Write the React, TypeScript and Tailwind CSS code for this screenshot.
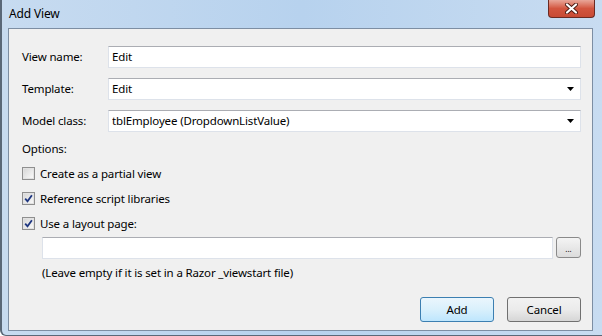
import React from 'react';

const font = "font-['Noto_Sans','Open_Sans',sans-serif]";

function Check({ checked }: { checked: boolean }) {
  return (
    <span className="flex h-[13px] w-[13px] shrink-0 items-center justify-center border border-[#8f8f8f] bg-white">
      <span className="flex h-[11px] w-[11px] items-center justify-center border border-[#e2e2e2] bg-gradient-to-br from-[#d8d8d8] to-[#f8f8f8]">
        {checked && (
          <svg width="9" height="9" viewBox="0 0 9 9">
            <path d="M1.2 4.6 L3.5 7.3 L7.9 1.2" fill="none" stroke="#1e3680" strokeWidth="1.8" />
          </svg>
        )}
      </span>
    </span>
  );
}

function TextBox({ value, dropdown }: { value?: string; dropdown?: boolean }) {
  return (
    <div className="flex h-[22px] flex-1 items-center border border-[#dde2ea] border-t-[#abadb3] bg-white pl-[3px] pr-[6px]">
      <span className="flex-1 truncate">{value}</span>
      {dropdown && (
        <svg width="7" height="4" viewBox="0 0 7 4">
          <path d="M0 0 H7 L3.5 4 Z" fill="#000" />
        </svg>
      )}
    </div>
  );
}

function Button({ label, focused }: { label: string; focused?: boolean }) {
  return (
    <button
      className={
        focused
          ? 'h-[25px] w-[74px] rounded-[3px] border border-[#3c7fb1] bg-gradient-to-b from-[#eaf6fd] via-[#d9f0fc] to-[#bee6fd] text-black'
          : 'h-[25px] w-[74px] rounded-[3px] border border-[#707070] bg-gradient-to-b from-[#f2f2f2] via-[#ebebeb] to-[#d6d6d6] text-black'
      }
    >
      {label}
    </button>
  );
}

export default function App() {
  return (
    <div className={`${font} h-[336px] w-[602px] overflow-hidden text-[11.5px] tracking-[-0.15px] text-black`}>
      <div className="flex h-full flex-col rounded-bl-[6px] border-b border-l-2 border-[#5a6878] bg-gradient-to-r from-[#c7dbf0] via-[#b7d2ee] to-[#c8dcf1]">
        {/* title bar */}
        <div className="flex h-[28px] shrink-0 items-start justify-between pl-[7px]">
          <span className="mt-[5px] text-[12px]">Add View</span>
          <div className="mr-[7px] flex h-[18px] w-[47px] items-center justify-center rounded-b-[4px] border border-t-0 border-[#6b2a22] bg-gradient-to-b from-[#e8a699] via-[#d2553f] to-[#c74a34]">
            <svg width="13" height="11" viewBox="0 0 13 11">
              <path d="M2 1.5 L11 9.5 M11 1.5 L2 9.5" stroke="#4a1a12" strokeWidth="4" strokeLinecap="round" />
              <path d="M2 1.5 L11 9.5 M11 1.5 L2 9.5" stroke="#fff" strokeWidth="2.2" strokeLinecap="round" />
            </svg>
          </div>
        </div>
        {/* content */}
        <div className="mb-[4px] ml-[6px] mr-[9px] flex flex-1 flex-col border border-[#7d8ea3] bg-[#f0f0f0] pl-[13px] pr-[11px] pt-[17px]">
          <div className="flex flex-col gap-[10px]">
            <div className="flex items-center">
              <span className="w-[86px]">View name:</span>
              <TextBox value="Edit" />
            </div>
            <div className="flex items-center">
              <span className="w-[86px]">Template:</span>
              <TextBox value="Edit" dropdown />
            </div>
            <div className="flex items-center">
              <span className="w-[86px]">Model class:</span>
              <TextBox value="tblEmployee (DropdownListValue)" dropdown />
            </div>
          </div>
          <div className="mt-[4px] flex h-[25px] items-center">Options:</div>
          <div className="flex h-[25px] items-center gap-[5px]">
            <Check checked={false} />
            <span>Create as a partial view</span>
          </div>
          <div className="flex h-[25px] items-center gap-[5px]">
            <Check checked />
            <span>Reference script libraries</span>
          </div>
          <div className="flex h-[25px] items-center gap-[5px]">
            <Check checked />
            <span>Use a layout page:</span>
          </div>
          <div className="mt-[1px] flex h-[21px] items-stretch gap-[3px] pl-[20px]">
            <TextBox />
            <button className="flex h-[21px] w-[25px] items-center justify-center rounded-[3px] border border-[#8a8a8a] bg-gradient-to-b from-[#f4f4f4] to-[#dcdcdc] pt-[2px] text-[8px] tracking-[0px]">
              ...
            </button>
          </div>
          <div className="mt-[7px] h-[16px] pl-[20px] leading-[16px]">(Leave empty if it is set in a Razor _viewstart file)</div>
          <div className="mt-[16px] flex justify-end gap-[13px]">
            <Button label="Add" focused />
            <Button label="Cancel" />
          </div>
        </div>
      </div>
    </div>
  );
}
